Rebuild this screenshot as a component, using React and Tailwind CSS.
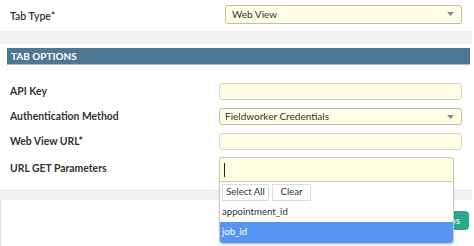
import React from "react";

function Caret() {
  return (
    <svg width="7" height="4" viewBox="0 0 7 4" className="shrink-0">
      <path d="M0 0h7L3.5 4z" fill="#8a8a8a" />
    </svg>
  );
}

function Row({ label, children, className = "" }) {
  return (
    <div className={`flex items-center ${className}`}>
      <div className="w-[212px] shrink-0 pl-[3px] text-[10.4px] font-bold text-[#333]">
        {label}
      </div>
      {children}
    </div>
  );
}

function TextField() {
  return (
    <div className="h-[17px] w-[243px] rounded-[3px] border border-[#d6d6c8] bg-[#fffde6]" />
  );
}

function SelectField({ value, className = "" }) {
  return (
    <div
      className={`flex h-[17px] items-center justify-between rounded-[3px] border border-[#bdbdb0] bg-[#fffde6] pl-[5px] pr-[7px] text-[10px] text-[#333] ${className}`}
    >
      <span>{value}</span>
      <Caret />
    </div>
  );
}

export default function App() {
  return (
    <div className="relative h-[246px] w-[474px] overflow-hidden bg-white font-['Lato',sans-serif]">
      {/* tab type */}
      <div className="flex h-[31px] items-center pl-[10px]">
        <div className="w-[215px] shrink-0 pt-[2px] text-[10.5px] font-semibold text-[#333]">
          Tab Type*
        </div>
        <SelectField value="Web View" className="mb-[3px] h-[19px] w-[237px] pl-[6px]" />
      </div>

      <div className="h-[13px] w-[472px] bg-[#f3f3f3]" />

      {/* tab options */}
      <div className="h-[145px] px-[7px] pt-[4px]">
        <div className="flex h-[17px] w-[463px] items-center border-b border-[#9fbccb] bg-[#4e7892] pl-[4px] text-[10px] font-bold text-white">
          TAB OPTIONS
        </div>

        <Row label="API Key" className="mt-[18px]">
          <TextField />
        </Row>
        <Row label="Authentication Method" className="mt-[8px]">
          <SelectField value="Fieldworker Credentials" className="w-[243px]" />
        </Row>
        <Row label="Web View URL*" className="mt-[8px]">
          <TextField />
        </Row>
        <Row label="URL GET Parameters" className="mt-[7px]">
          <div className="relative">
            <div className="flex h-[24px] w-[235px] items-center rounded-t-[3px] border border-b-0 border-[#c8c8c0] bg-[#fffde0] pl-[4px]">
              <div className="h-[14px] w-px bg-[#222]" />
            </div>
            <div className="absolute left-0 top-[24px] z-10 w-[235px] rounded-b-[4px] border border-[#c8c8c8] bg-white text-[9.6px] text-[#333] shadow-[0_1px_2px_rgba(0,0,0,0.15)]">
              <div className="flex gap-[3px] px-[2px] pt-[2px]">
                <div className="flex h-[17px] w-[47px] items-center justify-center border border-[#dcdcdc] bg-white">
                  Select All
                </div>
                <div className="flex h-[17px] w-[39px] items-center justify-center border border-[#dcdcdc] bg-white">
                  Clear
                </div>
              </div>
              <div className="flex h-[21px] items-center pl-[2px] pt-[1px]">appointment_id</div>
              <div className="flex h-[21px] items-center rounded-b-[3px] bg-[#5596f4] pl-[2px] text-white">
                job_id
              </div>
            </div>
          </div>
        </Row>
      </div>

      <div className="h-[11px] w-[472px] bg-[#f3f3f3]" />

      {/* bottom panel */}
      <div className="flex h-[46px] w-[472px] justify-end border-l border-[#e2e2e2] pr-[3px] pt-[11px]">
        <div className="flex h-[19px] items-center rounded-[4px] bg-[#27a98b] pl-[6px] pr-[9px] text-[10px] text-white">
          Save Tabs
        </div>
      </div>
    </div>
  );
}
